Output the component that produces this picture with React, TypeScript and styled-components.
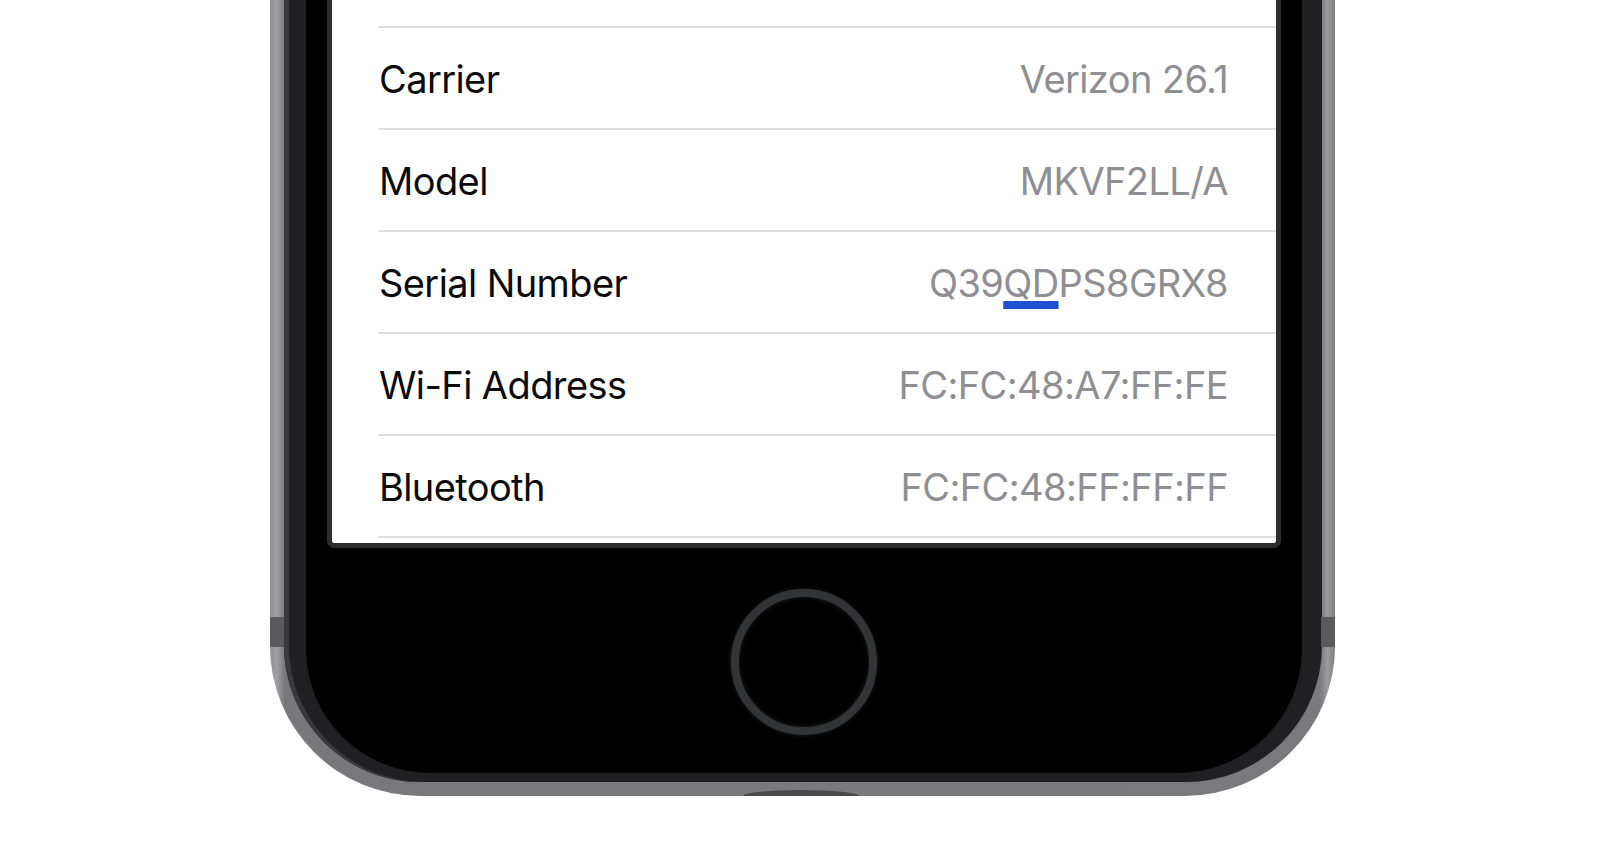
import React from "react";
import styled, { createGlobalStyle } from "styled-components";

const GlobalStyle = createGlobalStyle`
  html, body {
    margin: 0;
    padding: 0;
    background: #ffffff;
  }
  body {
    font-family: Inter, "Noto Sans", "Liberation Sans", sans-serif;
    -webkit-font-smoothing: antialiased;
  }
`;

const Page = styled.div`
  width: 1600px;
  height: 864px;
  overflow: hidden;
  background: #ffffff;
  padding-left: 270px;
  box-sizing: border-box;
`;

// aluminium rim around the whole handset
const Rim = styled.div`
  position: relative;
  width: 1065px;
  height: 796px;
  box-sizing: border-box;
  padding: 0 13px 14px 14px;
  border-radius: 0 0 150px 150px;
  background: linear-gradient(90deg, #8e8e92 0%, #a2a2a6 0.6%, #78787c 1.4%, #7a7a7e 98.6%, #9c9ca0 99.3%, #7c7c80 100%);
  display: flex;
`;

const AntennaLine = styled.div<{ $side: "left" | "right" }>`
  position: absolute;
  top: 617px;
  ${(p) => (p.$side === "left" ? "left: 0;" : "right: 0;")}
  width: 14px;
  height: 30px;
  background: #5a5a5e;
`;

const Port = styled.div`
  position: absolute;
  bottom: 0;
  left: 473px;
  width: 116px;
  height: 6px;
  border-radius: 50% 50% 0 0 / 100% 100% 0 0;
  background: #4a4a4e;
`;

const Band = styled.div`
  flex: 1;
  display: flex;
  box-sizing: border-box;
  padding: 0 20px 9px 22px;
  border-radius: 0 0 136px 136px;
  background: #202022;
  box-shadow: inset 5px 0 0 #3a3a3c;
`;

const Face = styled.div`
  flex: 1;
  display: flex;
  flex-direction: column;
  box-sizing: border-box;
  padding: 0 21px;
  border-radius: 0 0 124px 124px;
  background: #000000;
`;

const ScreenFrame = styled.div`
  border: 5px solid #2c2c2e;
  border-top: none;
  border-radius: 0 0 7px 7px;
  background: #2c2c2e;
`;

const Screen = styled.div`
  background: #ffffff;
  padding-bottom: 5px;
  border-radius: 0 0 2px 2px;
`;

const TopGap = styled.div`
  height: 26px;
  margin-left: 47px;
  border-bottom: 2px solid #dcdcde;
`;

const Row = styled.div`
  height: 100px;
  margin-left: 47px;
  padding-right: 48px;
  display: flex;
  align-items: center;
  justify-content: space-between;
  border-bottom: 2px solid #dcdcde;
  font-size: 38px;
  letter-spacing: -0.6px;
`;

const Label = styled.span`
  color: #0a0a0a;
  padding-top: 2px;
`;

const Value = styled.span`
  color: #8e8e93;
  padding-top: 2px;
`;

const Marked = styled.span`
  text-decoration: underline;
  text-decoration-color: #1f4fd2;
  text-decoration-thickness: 8px;
  text-underline-offset: 4px;
  text-decoration-skip-ink: none;
`;

const ButtonArea = styled.div`
  flex: 1;
  display: flex;
  align-items: center;
  justify-content: center;
  padding-top: 2px;
`;

const HomeButton = styled.div`
  width: 146px;
  height: 146px;
  box-sizing: border-box;
  border-radius: 50%;
  border: 8px solid #323438;
  background: #000000;
  box-shadow: 0 0 4px rgba(80, 82, 88, 0.4), inset 0 0 4px rgba(80, 82, 88, 0.4);
`;

const rows: { label: string; value: React.ReactNode }[] = [
  { label: "Carrier", value: "Verizon 26.1" },
  { label: "Model", value: "MKVF2LL/A" },
  {
    label: "Serial Number",
    value: (
      <>
        Q39<Marked>QD</Marked>PS8GRX8
      </>
    ),
  },
  { label: "Wi-Fi Address", value: "FC:FC:48:A7:FF:FE" },
  { label: "Bluetooth", value: "FC:FC:48:FF:FF:FF" },
];

const App = () => {
  return (
    <Page>
      <GlobalStyle />
      <Rim>
        <AntennaLine $side="left" />
        <AntennaLine $side="right" />
        <Port />
        <Band>
          <Face>
            <ScreenFrame>
              <Screen>
                <TopGap />
                {rows.map((row) => (
                  <Row key={row.label}>
                    <Label>{row.label}</Label>
                    <Value>{row.value}</Value>
                  </Row>
                ))}
              </Screen>
            </ScreenFrame>
            <ButtonArea>
              <HomeButton />
            </ButtonArea>
          </Face>
        </Band>
      </Rim>
    </Page>
  );
};

export default App;
